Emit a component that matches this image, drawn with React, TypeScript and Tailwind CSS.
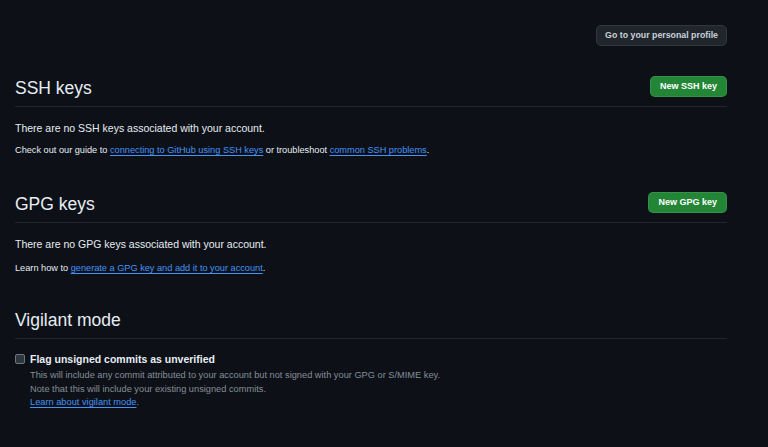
import React from "react";

const font = { fontFamily: '"Liberation Sans", Arial, sans-serif' };

function Subhead({ title, button }: { title: string; button?: string }) {
  return (
    <div className="flex items-center justify-between border-b border-[#21262d] pb-[6px]">
      <h2 className="mt-[3px] text-[17.5px] leading-[24px] font-normal text-[#e6edf3]">{title}</h2>
      {button ? (
        <button className="h-[21px] px-[9px] rounded-[5px] bg-[#238636] border border-[rgba(240,246,252,0.1)] text-white text-[9px] font-bold leading-none">
          {button}
        </button>
      ) : null}
    </div>
  );
}

export default function App() {
  return (
    <div className="min-h-[447px] w-full bg-[#0d1117] text-[#e6edf3]" style={font}>
      <div className="ml-[15px] w-[712px] pt-[25px]">
        <div className="flex justify-end">
          <button className="h-[21px] px-[8px] rounded-[5px] bg-[#21262d] border border-[#30363d] text-[#c9d1d9] text-[8.8px] font-bold leading-none">
            Go to your personal profile
          </button>
        </div>

        <div className="mt-[27px]">
          <Subhead title="SSH keys" button="New SSH key" />
          <p className="mt-[13px] text-[10.5px] leading-[16px]">There are no SSH keys associated with your account.</p>
          <p className="mt-[7px] text-[9.2px] leading-[14px]">
            Check out our guide to{" "}
            <a className="text-[#4493f8] underline underline-offset-2">connecting to GitHub using SSH keys</a> or troubleshoot{" "}
            <a className="text-[#4493f8] underline underline-offset-2">common SSH problems</a>.
          </p>
        </div>

        <div className="mt-[32px]">
          <Subhead title="GPG keys" button="New GPG key" />
          <p className="mt-[13px] text-[10.5px] leading-[16px]">There are no GPG keys associated with your account.</p>
          <p className="mt-[9px] text-[9.2px] leading-[14px]">
            Learn how to{" "}
            <a className="text-[#4493f8] underline underline-offset-2">generate a GPG key and add it to your account</a>.
          </p>
        </div>

        <div className="mt-[30px]">
          <Subhead title="Vigilant mode" />
          <div className="mt-[12px] flex items-start gap-[5px]">
            <div className="mt-[3px] w-[10px] h-[10px] rounded-[2px] border border-[#6e7681] bg-[#30363d] shrink-0" />
            <div>
              <div className="text-[10.5px] leading-[16px] font-bold">Flag unsigned commits as unverified</div>
              <div className="mt-[2px] text-[9.25px] leading-[13.5px] text-[#848d97]">
                This will include any commit attributed to your account but not signed with your GPG or S/MIME key.
                <br />
                Note that this will include your existing unsigned commits.
                <br />
                <a className="text-[#4493f8] underline underline-offset-2">Learn about vigilant mode</a>.
              </div>
            </div>
          </div>
        </div>
      </div>
    </div>
  );
}
